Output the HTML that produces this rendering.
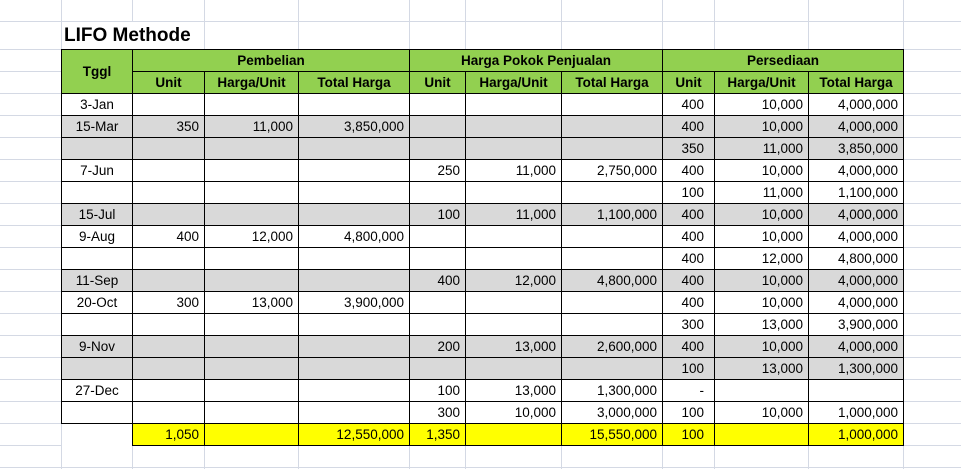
<!DOCTYPE html>
<html><head><style>
body{margin:0;width:961px;height:469px;background:#fff;position:relative;overflow:hidden;font-family:"Liberation Sans",Arial,sans-serif;}
.v{position:absolute;top:0;height:469px;width:1px;background:#d4d9e4}
.h{position:absolute;left:0;width:961px;height:1px;background:#d4d9e4}
table{position:absolute;left:61px;top:49px;border-collapse:collapse;table-layout:fixed;width:843px;font-size:13.5px}
td{border:1px solid #000;height:21px;padding:0 5px 0 2px;text-align:right;white-space:nowrap;overflow:hidden;box-sizing:border-box}
tr{height:22px}
.hd td{background:#92d050;font-weight:bold;text-align:center;padding:0}
.g td{background:#d9d9d9}
td.c{text-align:center;padding:0}
td.u{padding-right:10px}
.y td{background:#ff0}
.y td.n{background:#fff;border:none}
.t{position:absolute;left:64px;top:25px;font-size:19px;font-weight:bold}
</style></head><body>
<div class="h" style="top:21px"></div><div class="h" style="top:49px"></div>
<div class="h" style="top:71px"></div><div class="h" style="top:93px"></div>
<div class="h" style="top:115px"></div><div class="h" style="top:137px"></div>
<div class="h" style="top:159px"></div><div class="h" style="top:181px"></div>
<div class="h" style="top:203px"></div><div class="h" style="top:225px"></div>
<div class="h" style="top:247px"></div><div class="h" style="top:269px"></div>
<div class="h" style="top:291px"></div><div class="h" style="top:313px"></div>
<div class="h" style="top:335px"></div><div class="h" style="top:357px"></div>
<div class="h" style="top:379px"></div><div class="h" style="top:401px"></div>
<div class="h" style="top:423px"></div>
<div class="h" style="top:445px"></div><div class="h" style="top:467px"></div>
<div class="v" style="left:61px"></div><div class="v" style="left:132px"></div><div class="v" style="left:204px"></div><div class="v" style="left:298px"></div><div class="v" style="left:409px"></div><div class="v" style="left:465px"></div><div class="v" style="left:561px"></div><div class="v" style="left:662px"></div><div class="v" style="left:714px"></div><div class="v" style="left:808px"></div><div class="v" style="left:903px"></div>
<div style="position:absolute;left:62px;top:22px;width:141px;height:27px;background:#fff"></div>
<div class="t">LIFO Methode</div>
<table>
<colgroup><col style="width:71px"><col style="width:72px"><col style="width:94px"><col style="width:111px"><col style="width:56px"><col style="width:96px"><col style="width:101px"><col style="width:52px"><col style="width:94px"><col style="width:95px"></colgroup>
<tr class="hd"><td rowspan="2">Tggl</td><td colspan="3">Pembelian</td><td colspan="3">Harga Pokok Penjualan</td><td colspan="3">Persediaan</td></tr>
<tr class="hd"><td>Unit</td><td>Harga/Unit</td><td>Total Harga</td><td>Unit</td><td>Harga/Unit</td><td>Total Harga</td><td>Unit</td><td>Harga/Unit</td><td>Total Harga</td></tr>
<tr><td class="c">3-Jan</td><td></td><td></td><td></td><td></td><td></td><td></td><td class="u">400</td><td>10,000</td><td>4,000,000</td></tr>
<tr class="g"><td class="c">15-Mar</td><td>350</td><td>11,000</td><td>3,850,000</td><td></td><td></td><td></td><td class="u">400</td><td>10,000</td><td>4,000,000</td></tr>
<tr class="g"><td></td><td></td><td></td><td></td><td></td><td></td><td></td><td class="u">350</td><td>11,000</td><td>3,850,000</td></tr>
<tr><td class="c">7-Jun</td><td></td><td></td><td></td><td>250</td><td>11,000</td><td>2,750,000</td><td class="u">400</td><td>10,000</td><td>4,000,000</td></tr>
<tr><td></td><td></td><td></td><td></td><td></td><td></td><td></td><td class="u">100</td><td>11,000</td><td>1,100,000</td></tr>
<tr class="g"><td class="c">15-Jul</td><td></td><td></td><td></td><td>100</td><td>11,000</td><td>1,100,000</td><td class="u">400</td><td>10,000</td><td>4,000,000</td></tr>
<tr><td class="c">9-Aug</td><td>400</td><td>12,000</td><td>4,800,000</td><td></td><td></td><td></td><td class="u">400</td><td>10,000</td><td>4,000,000</td></tr>
<tr><td></td><td></td><td></td><td></td><td></td><td></td><td></td><td class="u">400</td><td>12,000</td><td>4,800,000</td></tr>
<tr class="g"><td class="c">11-Sep</td><td></td><td></td><td></td><td>400</td><td>12,000</td><td>4,800,000</td><td class="u">400</td><td>10,000</td><td>4,000,000</td></tr>
<tr><td class="c">20-Oct</td><td>300</td><td>13,000</td><td>3,900,000</td><td></td><td></td><td></td><td class="u">400</td><td>10,000</td><td>4,000,000</td></tr>
<tr><td></td><td></td><td></td><td></td><td></td><td></td><td></td><td class="u">300</td><td>13,000</td><td>3,900,000</td></tr>
<tr class="g"><td class="c">9-Nov</td><td></td><td></td><td></td><td>200</td><td>13,000</td><td>2,600,000</td><td class="u">400</td><td>10,000</td><td>4,000,000</td></tr>
<tr class="g"><td></td><td></td><td></td><td></td><td></td><td></td><td></td><td class="u">100</td><td>13,000</td><td>1,300,000</td></tr>
<tr><td class="c">27-Dec</td><td></td><td></td><td></td><td>100</td><td>13,000</td><td>1,300,000</td><td class="u">-</td><td></td><td></td></tr>
<tr><td></td><td></td><td></td><td></td><td>300</td><td>10,000</td><td>3,000,000</td><td class="u">100</td><td>10,000</td><td>1,000,000</td></tr>
<tr class="y"><td class="n"></td><td>1,050</td><td></td><td>12,550,000</td><td>1,350</td><td></td><td>15,550,000</td><td class="u">100</td><td></td><td>1,000,000</td></tr>
</table>
</body></html>
